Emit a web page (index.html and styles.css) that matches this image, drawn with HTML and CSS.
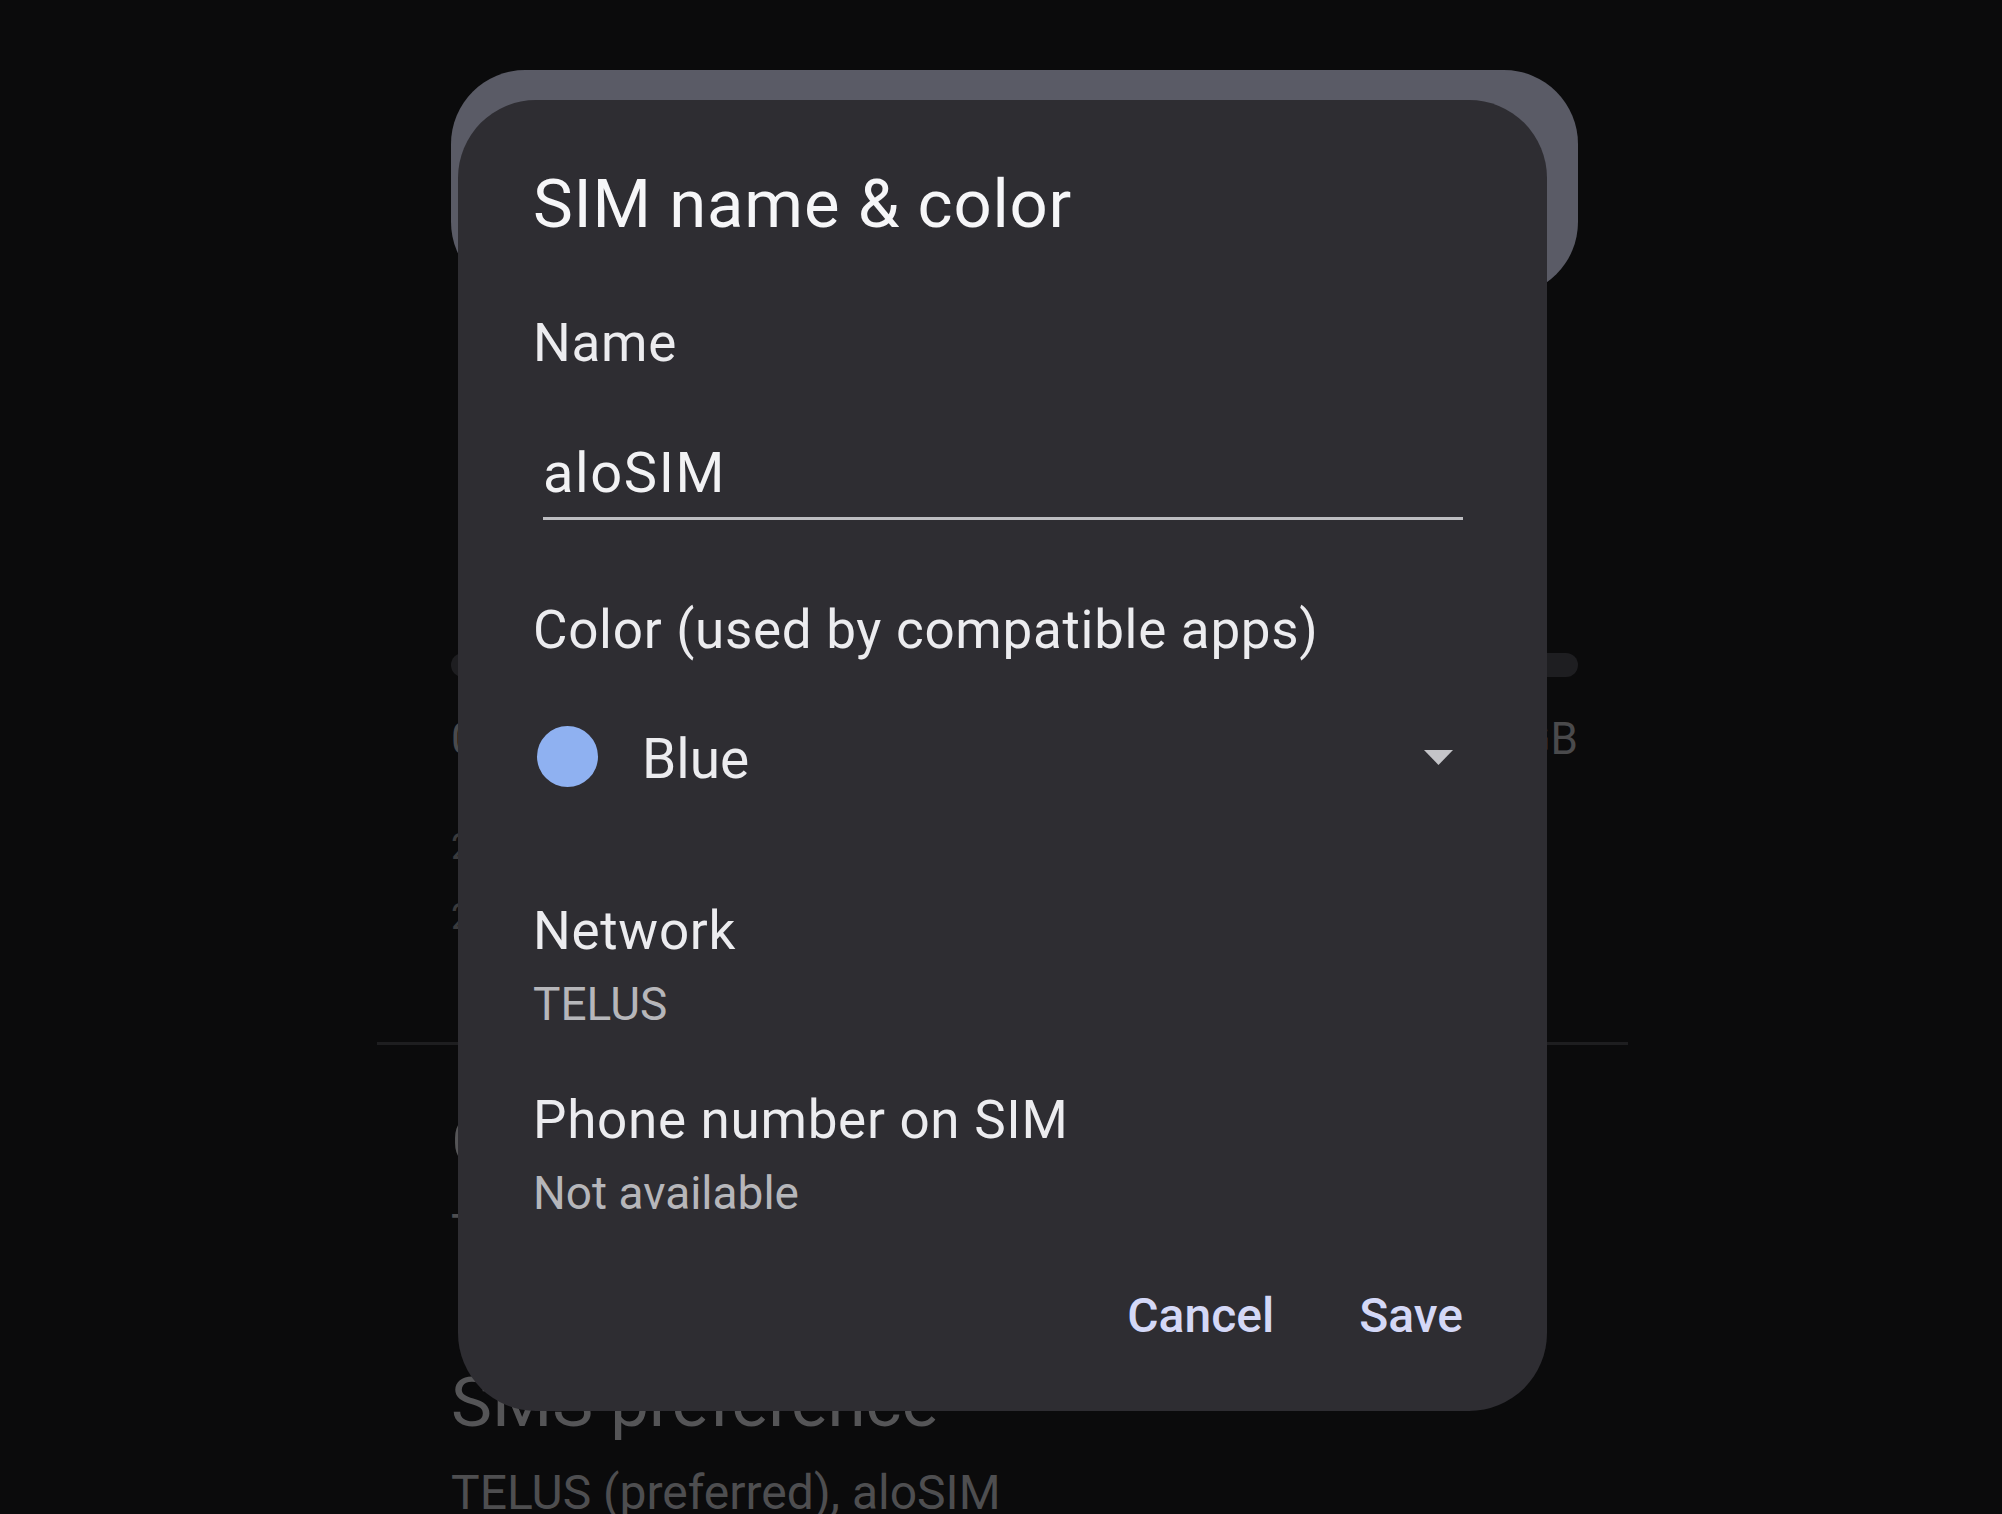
FILE: index.html
```html
<!DOCTYPE html>
<html lang="en">
<head>
	<meta charset="UTF-8">
	<meta name="viewport" content="width=device-width, initial-scale=1.0">
	<title>SIM name &amp; color</title>
	<link rel="stylesheet" href="styles.css">
</head>
<body>

	<!-- settings page behind the scrim -->
	<div class="page">
		<div class="sim_card"></div>
		<div class="usage_bar"></div>
		<div class="usage_labels">
			<span>0 B</span>
			<span>2.00 GB</span>
		</div>
		<div class="usage_line first">2.00 GB data warning</div>
		<div class="usage_line">2.00 GB data limit</div>
		<div class="divider"></div>
		<div class="pref">
			<div class="pref_title">Calls preference</div>
			<div class="pref_sub">TELUS</div>
		</div>
		<div class="pref">
			<div class="pref_title">SMS preference</div>
			<div class="pref_sub">TELUS (preferred), aloSIM</div>
		</div>
	</div>

	<div class="dialog">
		<div class="dialog_title">SIM name &amp; color</div>

		<div class="label name_label">Name</div>
		<div class="name_input">aloSIM</div>

		<div class="label color_label">Color (used by compatible apps)</div>
		<div class="color_row">
			<span class="swatch"></span>
			<span class="color_name">Blue</span>
			<svg class="arrow" width="29" height="15" viewBox="0 0 29 15"><polygon points="0,0 29,0 14.5,15" fill="#c4c4c8"/></svg>
		</div>

		<div class="label network_label">Network</div>
		<div class="info_value">TELUS</div>

		<div class="label phone_label">Phone number on SIM</div>
		<div class="info_value">Not available</div>

		<div class="buttons">
			<span class="btn">Cancel</span>
			<span class="btn">Save</span>
		</div>
	</div>

</body>
</html>
```

FILE: styles.css
```css
html, body {
	margin: 0;
	padding: 0;
}

body {
	width: 2002px;
	height: 1514px;
	overflow: hidden;
	position: relative;
	background: #0b0b0c;
	font-family: Roboto, "Noto Sans", sans-serif;
}

/* background page */
.page {
	width: 1127px;
	margin-left: 451px;
	padding-top: 70px;
	color: #4c4c4e;
}

.sim_card {
	height: 226px;
	border-radius: 74px;
	background: #5a5b66;
}

.usage_bar {
	margin-top: 357px;
	height: 24px;
	border-radius: 12px;
	background: #1e1e21;
}

.usage_labels {
	margin-top: 36px;
	display: flex;
	justify-content: space-between;
	font-size: 44px;
	line-height: 52px;
	color: #4a4a4c;
}

.usage_line {
	margin-top: 22px;
	font-size: 36px;
	line-height: 48px;
	color: #3a3a3c;
}

.usage_line.first {
	margin-top: 58px;
}

.divider {
	margin-top: 101px;
	margin-left: -74px;
	width: 1251px;
	height: 3px;
	background: #1e1e20;
}

.pref {
	margin-top: 55px;
}

.pref_title {
	font-size: 69px;
	line-height: 84px;
	color: #555557;
}

.pref_sub {
	margin-top: 18px;
	font-size: 48px;
	line-height: 60px;
	color: #4e4e50;
}

.pref + .pref {
	margin-top: 99px;
}

/* dialog over the page */
.dialog {
	position: absolute;
	left: 458px;
	top: 100px;
	width: 1089px;
	height: 1311px;
	box-sizing: border-box;
	padding: 64px 84px 0 75px;
	border-radius: 78px;
	background: #2e2d32;
	color: #ececef;
}

.dialog_title {
	font-size: 67px;
	line-height: 80px;
	letter-spacing: 0.8px;
	color: #f6f6f8;
}

.label {
	font-size: 53px;
	line-height: 64px;
	letter-spacing: 0.7px;
}

.name_label {
	margin-top: 67px;
}

.name_input {
	margin-top: 64px;
	margin-left: 10px;
	padding-bottom: 10px;
	font-size: 56px;
	line-height: 68px;
	letter-spacing: 1.6px;
	color: #f2f2f4;
	border-bottom: 3px solid #bdbdc1;
}

.color_label {
	margin-top: 78px;
}

.color_row {
	margin-top: 64px;
	height: 61px;
	display: flex;
	align-items: center;
}

.swatch {
	width: 61px;
	height: 61px;
	margin-left: 4px;
	border-radius: 50%;
	background: #8fb1f1;
}

.color_name {
	margin-left: 44px;
	padding-top: 6px;
	font-size: 55px;
	line-height: 61px;
	flex: 1;
}

.arrow {
	margin-right: 10px;
	margin-top: 2px;
}

.network_label {
	margin-top: 112px;
}

.phone_label {
	margin-top: 56px;
}

.info_value {
	margin-top: 13px;
	font-size: 46px;
	line-height: 56px;
	color: #b6b6ba;
}

.buttons {
	margin-top: 66px;
	display: flex;
	justify-content: flex-end;
	gap: 85px;
}

.btn {
	font-size: 48px;
	line-height: 58px;
	font-weight: 500;
	color: #d4d8f7;
}
```
